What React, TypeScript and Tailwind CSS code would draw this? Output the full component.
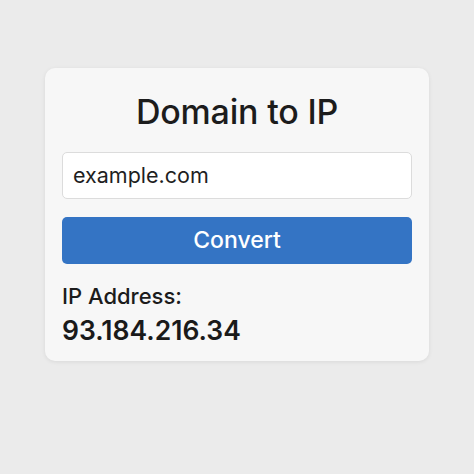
export default function App() {
  return (
    <div className="w-[474px] h-[474px] bg-[#ebebeb] flex items-start justify-center pt-[68px] font-['Inter',sans-serif]">
      <div className="w-[384px] h-[293px] bg-[#f7f7f7] rounded-[10px] shadow-[0_1px_4px_rgba(0,0,0,0.08)] px-[17px] pt-[20px]">
        <h1 className="text-center text-[34px] leading-[48px] font-medium text-[#1c1c1c] tracking-[-0.2px]">Domain to IP</h1>
        <div className="mt-[16px] h-[47px] bg-white border border-[#dcdcdc] rounded-[5px] flex items-center px-[10px] text-[21.5px] text-[#1f1f1f]">
          example.com
        </div>
        <button className="mt-[18px] w-full h-[47px] bg-[#3474c4] rounded-[5px] text-white text-[23px] font-medium">
          Convert
        </button>
        <div className="mt-[19px] text-[22px] leading-[26px] font-medium text-[#1c1c1c]">IP Address:</div>
        <div className="mt-[4px] text-[26.5px] leading-[34px] font-semibold text-[#1a1a1a]">93.184.216.34</div>
      </div>
    </div>
  );
}
